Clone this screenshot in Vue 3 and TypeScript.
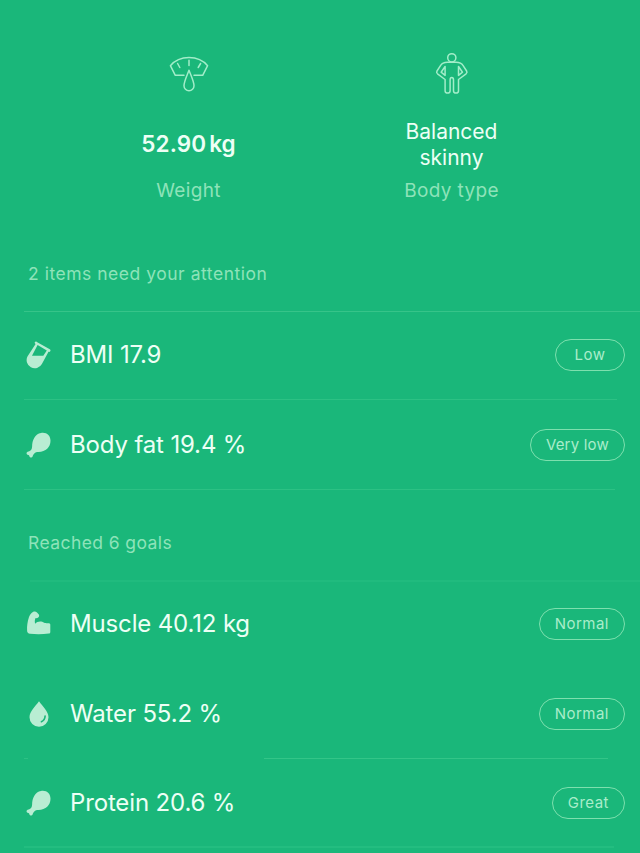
<script setup lang="ts">
type IconName = 'tube' | 'drumstick' | 'arm' | 'drop'

interface Metric {
  icon: IconName
  label: string
  status: string
  key: string
}

interface Group {
  title: string
  key: string
  items: Metric[]
}

const groups: Group[] = [
  {
    title: '2 items need your attention',
    key: 'attention',
    items: [
      { icon: 'tube', label: 'BMI 17.9', status: 'Low', key: 'bmi' },
      { icon: 'drumstick', label: 'Body fat 19.4 %', status: 'Very low', key: 'fat' },
    ],
  },
  {
    title: 'Reached 6 goals',
    key: 'goals',
    items: [
      { icon: 'arm', label: 'Muscle 40.12 kg', status: 'Normal', key: 'muscle' },
      { icon: 'drop', label: 'Water 55.2 %', status: 'Normal', key: 'water' },
      { icon: 'drumstick', label: 'Protein 20.6 %', status: 'Great', key: 'protein' },
    ],
  },
]
</script>

<template>
  <main class="screen">
    <section class="summary">
      <div class="stat">
        <svg class="stat-icon" viewBox="0 0 44 44">
          <path d="M17 23.300H8.300L3.400 13.700C12.500 2.700 31.500 2.700 40.600 13.700L35.700 23.300H27" />
          <path d="M22 8.300v5.200M10.600 11.500l2.200 4M33.600 11.500l-2.400 4" />
          <path d="M22 18.200c-1.500 4.200-5 11.200-5 15.500a5 5 0 0 0 10 0c0-4.300-3.500-11.300-5-15.500z" />
        </svg>
        <div class="value"><strong>52.90<span class="unit">kg</span></strong></div>
        <div class="caption">Weight</div>
      </div>
      <div class="stat">
        <svg class="stat-icon" viewBox="0 0 44 44">
          <circle cx="21.800" cy="5.800" r="4.100" />
          <path d="M17.500 10.200h8.500c3.500.2 5.700 1 6.800 3l3.800 5.800c.6 1 .4 2-.5 2.800l-7.600 5.700v11.200c0 3.200-5 3.200-5 0V28c0-3.200-3.400-3.200-3.400 0v10.700c0 3.200-5 3.200-5 0V27.500l-7.600-5.700c-.9-.8-1.100-1.800-.5-2.800l3.800-5.800c1.100-2 3.200-2.800 6.700-3z" />
          <path d="M15.100 14.500l-4 5.700 4 3.200zM28.500 14.500l4 5.700-4 3.200z" />
        </svg>
        <div class="value">Balanced<br />skinny</div>
        <div class="caption">Body type</div>
      </div>
    </section>

    <section v-for="group in groups" :key="group.key" class="group" :class="group.key">
      <h2>{{ group.title }}</h2>
      <ul>
        <li v-for="item in group.items" :key="item.key" :class="item.key">
          <svg class="icon" viewBox="0 0 28 28">
            <template v-if="item.icon === 'tube'">
              <path fill-rule="evenodd" d="M9.900 1.100c.5-.7 1.200-.8 1.900-.2l13 7.400c.8.600.9 1.300.4 2-.5.700-1 .8-1.700.5L16.900 23A8.100 8.100 0 0 1 2.600 15.300L10.600 3c-.8-.5-1.100-1.100-.7-1.900zM12.600 4.100L7 14.800h11.300L21.800 9.400z" />
            </template>
            <template v-else-if="item.icon === 'drumstick'">
              <path d="M16 1.900c5.600-.9 9.500 2.400 9.500 7.900 0 6.500-4.700 11-12.100 11.300-1.700 0-3 .3-4.100 1.400-.9.900-1.200 1.700-1.700 2.900-.5 1.500-2.800 1.500-3.300-.5-.1-.6-.4-.8-1-.9-2.200-.4-2.300-2.700-.7-3.300 1.300-.3 2.200-.5 3.200-1.500 1-1 1.200-2.100 1.300-3.700C7.100 8.900 10.100 2.800 16 1.900z" />
            </template>
            <template v-else-if="item.icon === 'arm'">
              <path d="M8.300 1.700c1.500-.6 2.700-.2 3.700.9l1.600 1.700c.9 1.100.7 2.300-.4 3.200-.8.700-1.700.8-2.600.6-.8 1.500-1 3.400-.5 5.700 1.600-1.800 3.600-2.600 6-2.300 1.700.2 2.600 1.200 3.900 1.500 1.300.3 2.600 0 4 .2.900.1 1.300.7 1.300 1.600v7.200c0 .9-.4 1.400-1.400 1.600-6.500.8-13 .8-18.900.2-1.900-.2-2.800-1.200-2.900-3-.2-4.300.3-9.300 1.900-13.700.8-2.300 2.200-4.500 4.300-5.400z" />
            </template>
            <template v-else>
              <path d="M14 1.300c3.600 5 9.500 10.400 9.500 15.900a9.500 9.500 0 0 1-19 0C4.500 11.700 10.400 6.300 14 1.300z" />
              <path class="glint" d="M20.100 16c-.1 2.700-1.400 4.700-3.700 5.700" />
            </template>
          </svg>
          <span class="name">{{ item.label }}</span>
          <span class="pill">{{ item.status }}</span>
        </li>
      </ul>
    </section>
  </main>
</template>

<style>
html,
body {
  margin: 0;
  background: #1ab77a;
  overflow: hidden;
}
</style>

<style scoped>
.screen {
  box-sizing: border-box;
  width: 640px;
  height: 853px;
  overflow: hidden;
  background: #1ab77a;
  color: #edfff5;
  font-family: Inter, "Liberation Sans", sans-serif;
}

.summary {
  display: grid;
  grid-template-columns: 263px 263px;
  justify-content: center;
  height: 235px;
  padding-top: 52px;
  box-sizing: border-box;
}

.stat {
  display: flex;
  flex-direction: column;
  align-items: center;
  text-align: center;
}

.stat-icon {
  width: 44px;
  height: 44px;
  fill: none;
  stroke: #a2edc9;
  stroke-width: 1.5;
  stroke-linejoin: round;
  stroke-linecap: round;
}

.value {
  display: flex;
  align-items: center;
  height: 52px;
  margin-top: 23px;
  font-size: 21px;
  line-height: 26px;
}

.value strong {
  padding-bottom: 2px;
  font-size: 22.5px;
  font-weight: 600;
  letter-spacing: 0.1px;
}

.unit {
  margin-left: 3px;
}

.caption {
  margin-top: 7px;
  font-size: 19px;
  line-height: 25px;
  letter-spacing: 0.35px;
  color: #8ee3b9;
}

.group h2 {
  display: flex;
  align-items: center;
  box-sizing: border-box;
  height: 75.5px;
  margin: 0;
  padding: 2px 0 0 28px;
  font-size: 17.5px;
  font-weight: 400;
  letter-spacing: 0.52px;
  color: #8ee3b9;
}

.goals h2 {
  height: 89.5px;
  padding-top: 16px;
  letter-spacing: 0.42px;
}

ul {
  list-style: none;
  margin: 0;
  padding: 0;
  background: linear-gradient(#36c489, #36c489) 24px 0 / 616px 1px no-repeat;
}

.goals ul {
  background: linear-gradient(#20bb7e, #20bb7e) 30px 0 / 610px 2px no-repeat;
}

li {
  display: flex;
  align-items: center;
  box-sizing: border-box;
  height: 89.5px;
  padding: 0 15px 0 25px;
}

.bmi {
  height: 89px;
  background: linear-gradient(#2cc184, #2cc184) 24px 100% / 593px 1px no-repeat;
}

.fat {
  height: 90.5px;
  background: linear-gradient(#2cc184, #2cc184) 24px 100% / 591px 1px no-repeat;
}

.water {
  background:
    linear-gradient(#2cc184, #2cc184) 24px 100% / 4px 1px no-repeat,
    linear-gradient(#33c588, #33c588) 264px 100% / 344px 1px no-repeat;
}

.protein {
  background: linear-gradient(#23bd80, #23bd80) 24px 100% / 590px 2px no-repeat;
}

.icon {
  width: 28px;
  height: 28px;
  fill: #b9edd3;
}

.glint {
  fill: none;
  stroke: #1ab77a;
  stroke-width: 1.6;
  stroke-linecap: round;
}

.name {
  margin-left: 17px;
  font-size: 24px;
  line-height: 30px;
  letter-spacing: -0.15px;
  white-space: nowrap;
}

.pill {
  box-sizing: border-box;
  height: 32px;
  margin-left: auto;
  padding: 0 15px;
  border: 1px solid #7de0ae;
  border-radius: 16px;
  font-size: 15px;
  line-height: 30px;
  letter-spacing: 0.5px;
  color: #a9edca;
}

.bmi .pill {
  padding: 0 18.5px;
}

.fat .pill {
  letter-spacing: 0.2px;
}
</style>
